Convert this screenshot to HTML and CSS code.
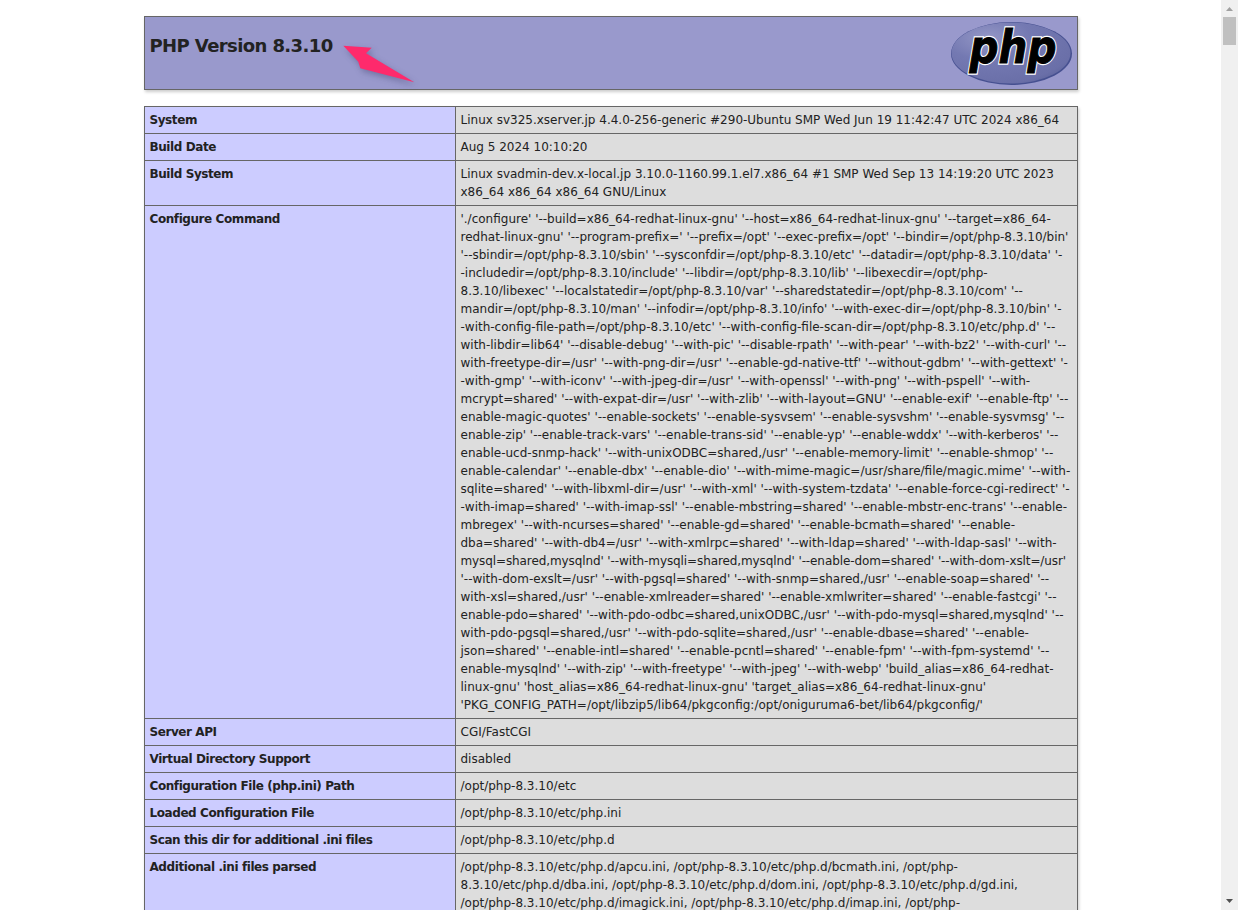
FILE: index.html
```html
<!DOCTYPE html>
<html lang="en">
<head>
<meta charset="utf-8">
<title>PHP 8.3.10 - phpinfo()</title>
<link rel="stylesheet" href="styles.css">
</head>
<body>
<div class="center">
<table class="info">
<tr class="h"><td class="head">
<svg class="logo" viewBox="0 0 122 64" width="122" height="64" role="img" aria-label="php">
<defs>
<radialGradient id="oval" cx="0.3" cy="0.25" r="0.9">
<stop offset="0" stop-color="#9497c6"/>
<stop offset="0.4" stop-color="#7479b2"/>
<stop offset="0.85" stop-color="#6a6fa8"/>
<stop offset="1" stop-color="#5a6199"/>
</radialGradient>
</defs>
<ellipse cx="60.500" cy="32.500" rx="60.500" ry="31.500" fill="#465090"/>
<ellipse cx="60" cy="32" rx="59.500" ry="30.500" fill="url(#oval)"/>
<text class="logo-text logo-halo" x="62" y="41.500" text-anchor="middle" textLength="87" lengthAdjust="spacingAndGlyphs" aria-hidden="true">php</text>
<text class="logo-text" x="62" y="41.500" text-anchor="middle" textLength="87" lengthAdjust="spacingAndGlyphs">php</text>
</svg>
<h1 class="p">PHP Version 8.3.10</h1>
</td></tr>
</table>
<table class="info fixed">
<tr><td class="e">System</td><td class="v">Linux sv325.xserver.jp 4.4.0-256-generic #290-Ubuntu SMP Wed Jun 19 11:42:47 UTC 2024 x86_64</td></tr>
<tr><td class="e">Build Date</td><td class="v">Aug 5 2024 10:10:20</td></tr>
<tr><td class="e">Build System</td><td class="v">Linux svadmin-dev.x-local.jp 3.10.0-1160.99.1.el7.x86_64 #1 SMP Wed Sep 13 14:19:20 UTC 2023<br>x86_64 x86_64 x86_64 GNU/Linux</td></tr>
<tr><td class="e">Configure Command</td><td class="v">'./configure' '--build=x86_64-redhat-linux-gnu' '--host=x86_64-redhat-linux-gnu' '--target=x86_64-<br>
redhat-linux-gnu' '--program-prefix=' '--prefix=/opt' '--exec-prefix=/opt' '--bindir=/opt/php-8.3.10/bin'<br>
'--sbindir=/opt/php-8.3.10/sbin' '--sysconfdir=/opt/php-8.3.10/etc' '--datadir=/opt/php-8.3.10/data' '-<br>
-includedir=/opt/php-8.3.10/include' '--libdir=/opt/php-8.3.10/lib' '--libexecdir=/opt/php-<br>
8.3.10/libexec' '--localstatedir=/opt/php-8.3.10/var' '--sharedstatedir=/opt/php-8.3.10/com' '--<br>
mandir=/opt/php-8.3.10/man' '--infodir=/opt/php-8.3.10/info' '--with-exec-dir=/opt/php-8.3.10/bin' '-<br>
-with-config-file-path=/opt/php-8.3.10/etc' '--with-config-file-scan-dir=/opt/php-8.3.10/etc/php.d' '--<br>
with-libdir=lib64' '--disable-debug' '--with-pic' '--disable-rpath' '--with-pear' '--with-bz2' '--with-curl' '--<br>
with-freetype-dir=/usr' '--with-png-dir=/usr' '--enable-gd-native-ttf' '--without-gdbm' '--with-gettext' '-<br>
-with-gmp' '--with-iconv' '--with-jpeg-dir=/usr' '--with-openssl' '--with-png' '--with-pspell' '--with-<br>
mcrypt=shared' '--with-expat-dir=/usr' '--with-zlib' '--with-layout=GNU' '--enable-exif' '--enable-ftp' '--<br>
enable-magic-quotes' '--enable-sockets' '--enable-sysvsem' '--enable-sysvshm' '--enable-sysvmsg' '--<br>
enable-zip' '--enable-track-vars' '--enable-trans-sid' '--enable-yp' '--enable-wddx' '--with-kerberos' '--<br>
enable-ucd-snmp-hack' '--with-unixODBC=shared,/usr' '--enable-memory-limit' '--enable-shmop' '--<br>
enable-calendar' '--enable-dbx' '--enable-dio' '--with-mime-magic=/usr/share/file/magic.mime' '--with-<br>
sqlite=shared' '--with-libxml-dir=/usr' '--with-xml' '--with-system-tzdata' '--enable-force-cgi-redirect' '-<br>
-with-imap=shared' '--with-imap-ssl' '--enable-mbstring=shared' '--enable-mbstr-enc-trans' '--enable-<br>
mbregex' '--with-ncurses=shared' '--enable-gd=shared' '--enable-bcmath=shared' '--enable-<br>
dba=shared' '--with-db4=/usr' '--with-xmlrpc=shared' '--with-ldap=shared' '--with-ldap-sasl' '--with-<br>
<span class="tight">mysql=shared,mysqlnd' '--with-mysqli=shared,mysqlnd' '--enable-dom=shared' '--with-dom-xslt=/usr'</span><br>
'--with-dom-exslt=/usr' '--with-pgsql=shared' '--with-snmp=shared,/usr' '--enable-soap=shared' '--<br>
with-xsl=shared,/usr' '--enable-xmlreader=shared' '--enable-xmlwriter=shared' '--enable-fastcgi' '--<br>
enable-pdo=shared' '--with-pdo-odbc=shared,unixODBC,/usr' '--with-pdo-mysql=shared,mysqlnd' '--<br>
with-pdo-pgsql=shared,/usr' '--with-pdo-sqlite=shared,/usr' '--enable-dbase=shared' '--enable-<br>
json=shared' '--enable-intl=shared' '--enable-pcntl=shared' '--enable-fpm' '--with-fpm-systemd' '--<br>
enable-mysqlnd' '--with-zip' '--with-freetype' '--with-jpeg' '--with-webp' 'build_alias=x86_64-redhat-<br>
linux-gnu' 'host_alias=x86_64-redhat-linux-gnu' 'target_alias=x86_64-redhat-linux-gnu'<br>
'PKG_CONFIG_PATH=/opt/libzip5/lib64/pkgconfig:/opt/oniguruma6-bet/lib64/pkgconfig/'</td></tr>
<tr><td class="e">Server API</td><td class="v">CGI/FastCGI</td></tr>
<tr><td class="e">Virtual Directory Support</td><td class="v">disabled</td></tr>
<tr><td class="e">Configuration File (php.ini) Path</td><td class="v">/opt/php-8.3.10/etc</td></tr>
<tr><td class="e">Loaded Configuration File</td><td class="v">/opt/php-8.3.10/etc/php.ini</td></tr>
<tr><td class="e">Scan this dir for additional .ini files</td><td class="v">/opt/php-8.3.10/etc/php.d</td></tr>
<tr><td class="e">Additional .ini files parsed</td><td class="v">/opt/php-8.3.10/etc/php.d/apcu.ini, /opt/php-8.3.10/etc/php.d/bcmath.ini, /opt/php-<br>
8.3.10/etc/php.d/dba.ini, /opt/php-8.3.10/etc/php.d/dom.ini, /opt/php-8.3.10/etc/php.d/gd.ini,<br>
/opt/php-8.3.10/etc/php.d/imagick.ini, /opt/php-8.3.10/etc/php.d/imap.ini, /opt/php-</td></tr>
</table>
</div>
<svg class="arrow" viewBox="0 0 90 50" width="90" height="50" aria-hidden="true">
<polygon points="8.300,10.700 36.700,12.700 31,18.300 79.300,47.300 25.300,33.300 23.300,26.700" fill="#fe2a6c"/>
</svg>
<div class="scrollbar" aria-hidden="true">
<svg class="sb-btn" viewBox="0 0 17 17" width="17" height="17"><path d="M5 11h7L8.500 7z" fill="#a0a0a0"/></svg>
<div class="sb-thumb"></div>
<svg class="sb-btn sb-down" viewBox="0 0 17 17" width="17" height="17"><path d="M5 6h7L8.500 10z" fill="#505050"/></svg>
</div>
</body>
</html>
```
FILE: styles.css
```css
html {
  background: #fff;
}
body {
  margin: 0;
  padding-right: 17px;
  background: #fff;
  color: #222;
  font-family: "DejaVu Sans", Verdana, sans-serif;
}
.center {
  text-align: left;
}
.info {
  border-collapse: collapse;
  border: 0;
  width: 934px;
  margin: 16px auto;
  box-shadow: 1px 2px 3px #ccc;
}
.fixed {
  table-layout: fixed;
}
.info td {
  border: 1px solid #666;
  font-size: 12px;
  line-height: 18px;
  vertical-align: baseline;
  padding: 4px 5px;
}
.h {
  background: #99c;
}
.info .head {
  vertical-align: top;
}
.p {
  margin: 15px 0 0;
  font-size: 18px;
  line-height: 20px;
  font-weight: bold;
  letter-spacing: -0.6px;
}
.logo {
  float: right;
  display: block;
  margin-right: -1px;
}
.logo-text {
  font-family: "DejaVu Sans", sans-serif;
  font-size: 46px;
  font-weight: bold;
  font-style: italic;
  fill: #000;
  stroke: #000;
  stroke-width: 1;
}
.logo-halo {
  fill: #fff;
  stroke: #fff;
  stroke-width: 3.4;
}
.e {
  background: #ccf;
  width: 300px;
  font-weight: bold;
  letter-spacing: -0.42px;
}
.v {
  background: #ddd;
  white-space: nowrap;
}
.tight {
  letter-spacing: -0.1px;
}
.arrow {
  position: absolute;
  left: 335px;
  top: 35px;
  filter: drop-shadow(2px 3px 3px rgba(40, 40, 80, 0.35));
}
.scrollbar {
  position: fixed;
  top: 0;
  right: 0;
  bottom: 0;
  width: 17px;
  display: flex;
  flex-direction: column;
  background: #f0f0f0;
}
.sb-btn {
  display: block;
  flex: none;
}
.sb-thumb {
  height: 28px;
  margin: 0 2px;
  background: #c0c0c0;
}
.sb-down {
  margin-top: auto;
}
```
